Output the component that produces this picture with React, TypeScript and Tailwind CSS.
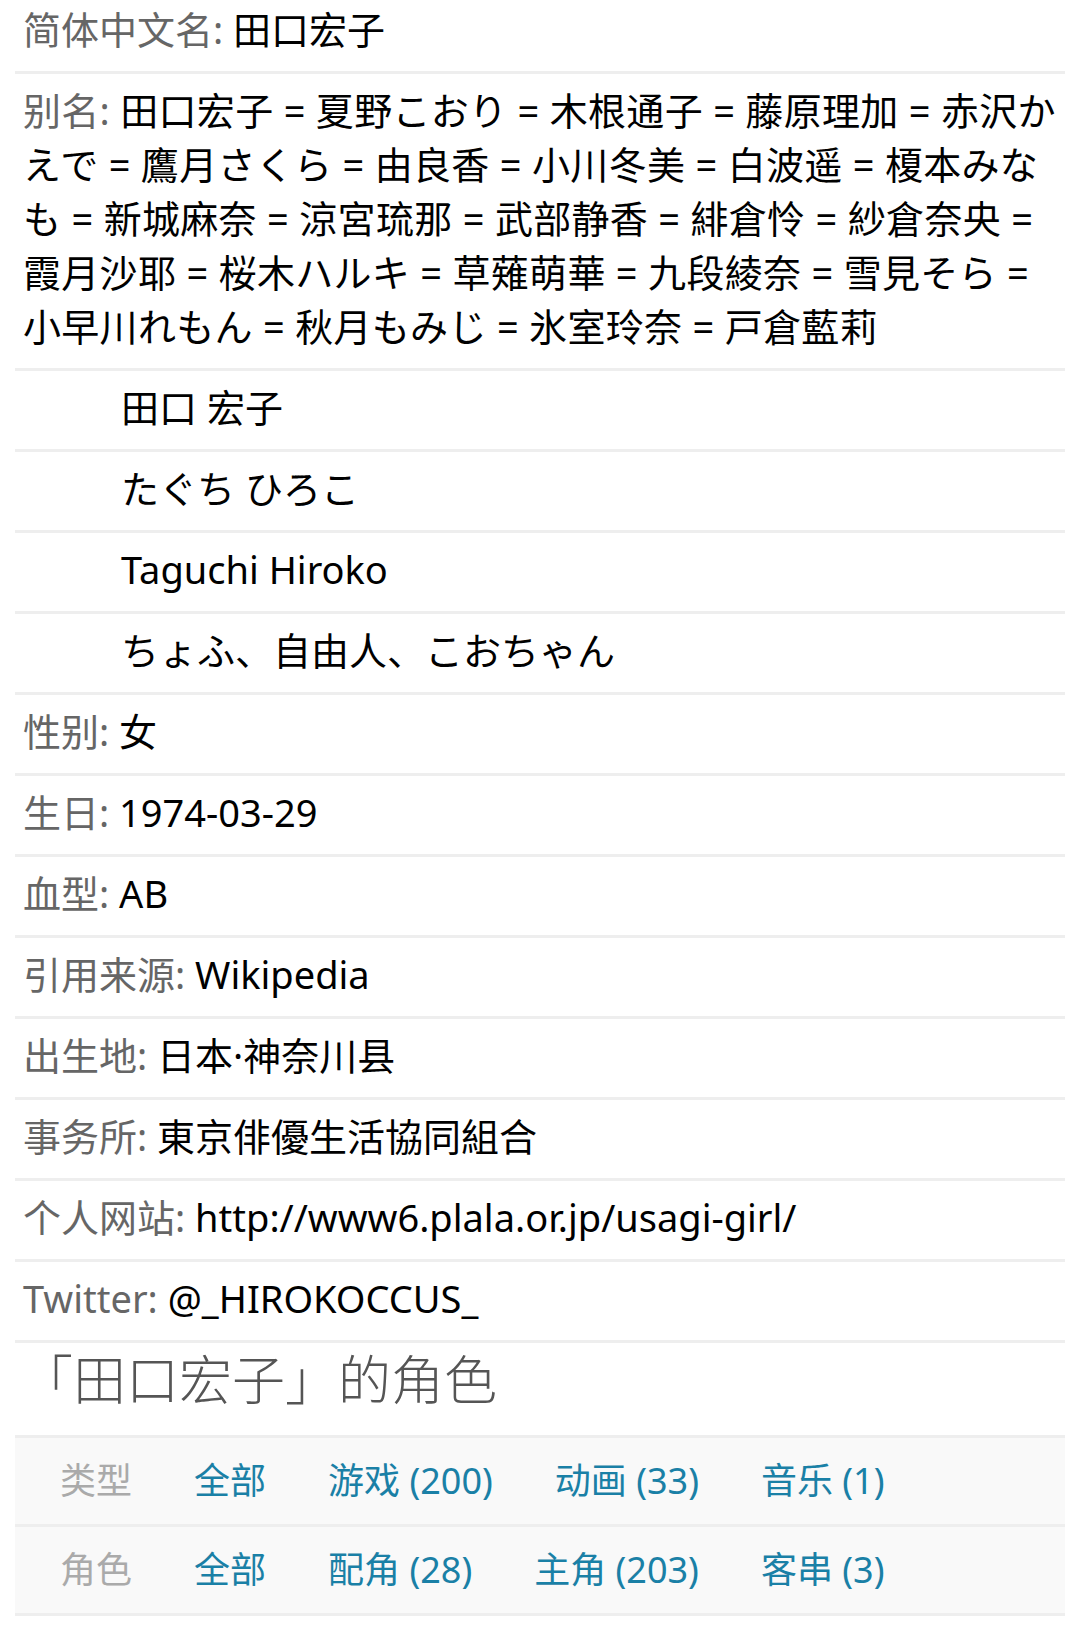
const font = { fontFamily: '"Noto Sans", "Noto Sans CJK SC", "Noto Sans CJK JP", sans-serif' };

type Info = { label?: string; value: string };

const aliasLines = [
  "田口宏子 = 夏野こおり = 木根通子 = 藤原理加 = 赤沢か",
  "えで = 鷹月さくら = 由良香 = 小川冬美 = 白波遥 = 榎本みな",
  "も = 新城麻奈 = 涼宮琉那 = 武部静香 = 緋倉怜 = 紗倉奈央 =",
  "霞月沙耶 = 桜木ハルキ = 草薙萌華 = 九段綾奈 = 雪見そら =",
  "小早川れもん = 秋月もみじ = 氷室玲奈 = 戸倉藍莉",
];

const infos: Info[] = [
  { value: "田口 宏子" },
  { value: "たぐち ひろこ" },
  { value: "Taguchi Hiroko" },
  { value: "ちょふ、自由人、こおちゃん" },
  { label: "性别", value: "女" },
  { label: "生日", value: "1974-03-29" },
  { label: "血型", value: "AB" },
  { label: "引用来源", value: "Wikipedia" },
  { label: "出生地", value: "日本·神奈川县" },
  { label: "事务所", value: "東京俳優生活協同組合" },
  { label: "个人网站", value: "http://www6.plala.or.jp/usagi-girl/" },
  { label: "Twitter", value: "@_HIROKOCCUS_" },
];

const filters = [
  { label: "类型", items: ["全部", "游戏 (200)", "动画 (33)", "音乐 (1)"] },
  { label: "角色", items: ["全部", "配角 (28)", "主角 (203)", "客串 (3)"] },
];

function InfoRow({ label, value }: Info) {
  return (
    <li className={`border-b-[3px] border-[#eeeeee] pt-[9px] pb-[15px] text-[38px] leading-[54px] whitespace-nowrap ${label ? "pl-2" : "pl-[106px]"}`}>
      {label && <span className="text-[#666666]">{label}: </span>}
      <span className="text-black">{value}</span>
    </li>
  );
}

export default function App() {
  return (
    <div className="bg-white w-[1080px] h-[1625px] overflow-hidden px-[15px]" style={font}>
      <ul>
        <li className="border-b-[3px] border-[#eeeeee] pt-[2px] pb-[15px] pl-2 text-[38px] leading-[54px]">
          <span className="text-[#666666]">简体中文名: </span>
          <span className="text-black">田口宏子</span>
        </li>
        <li className="border-b-[3px] border-[#eeeeee] pt-[9px] pb-[15px] pl-2 text-[38px] leading-[54px] whitespace-nowrap tracking-[0.3px]">
          {aliasLines.map((line, i) => (
            <div key={i}>
              {i === 0 && <span className="text-[#666666]">别名: </span>}
              <span className="text-black">{line}</span>
            </div>
          ))}
        </li>
        {infos.map((info, i) => (
          <InfoRow key={i} {...info} />
        ))}
      </ul>

      <h2 className="pl-[5px] pt-[2px] pb-[20px] text-[53px] leading-[70px] font-light text-[#555555]">
        「田口宏子」的角色
      </h2>

      <div className="border-t-[3px] border-[#eeeeee]">
        {filters.map((row) => (
          <div
            key={row.label}
            className="flex items-center gap-[62px] h-[89px] pl-[45px] bg-[#f9f9f9] border-b-[3px] border-[#eeeeee] text-[36px] whitespace-nowrap"
          >
            <span className="text-[#aaaaaa]">{row.label}</span>
            {row.items.map((item) => (
              <a key={item} className="text-[#1a80a6]">
                {item}
              </a>
            ))}
          </div>
        ))}
      </div>
    </div>
  );
}
